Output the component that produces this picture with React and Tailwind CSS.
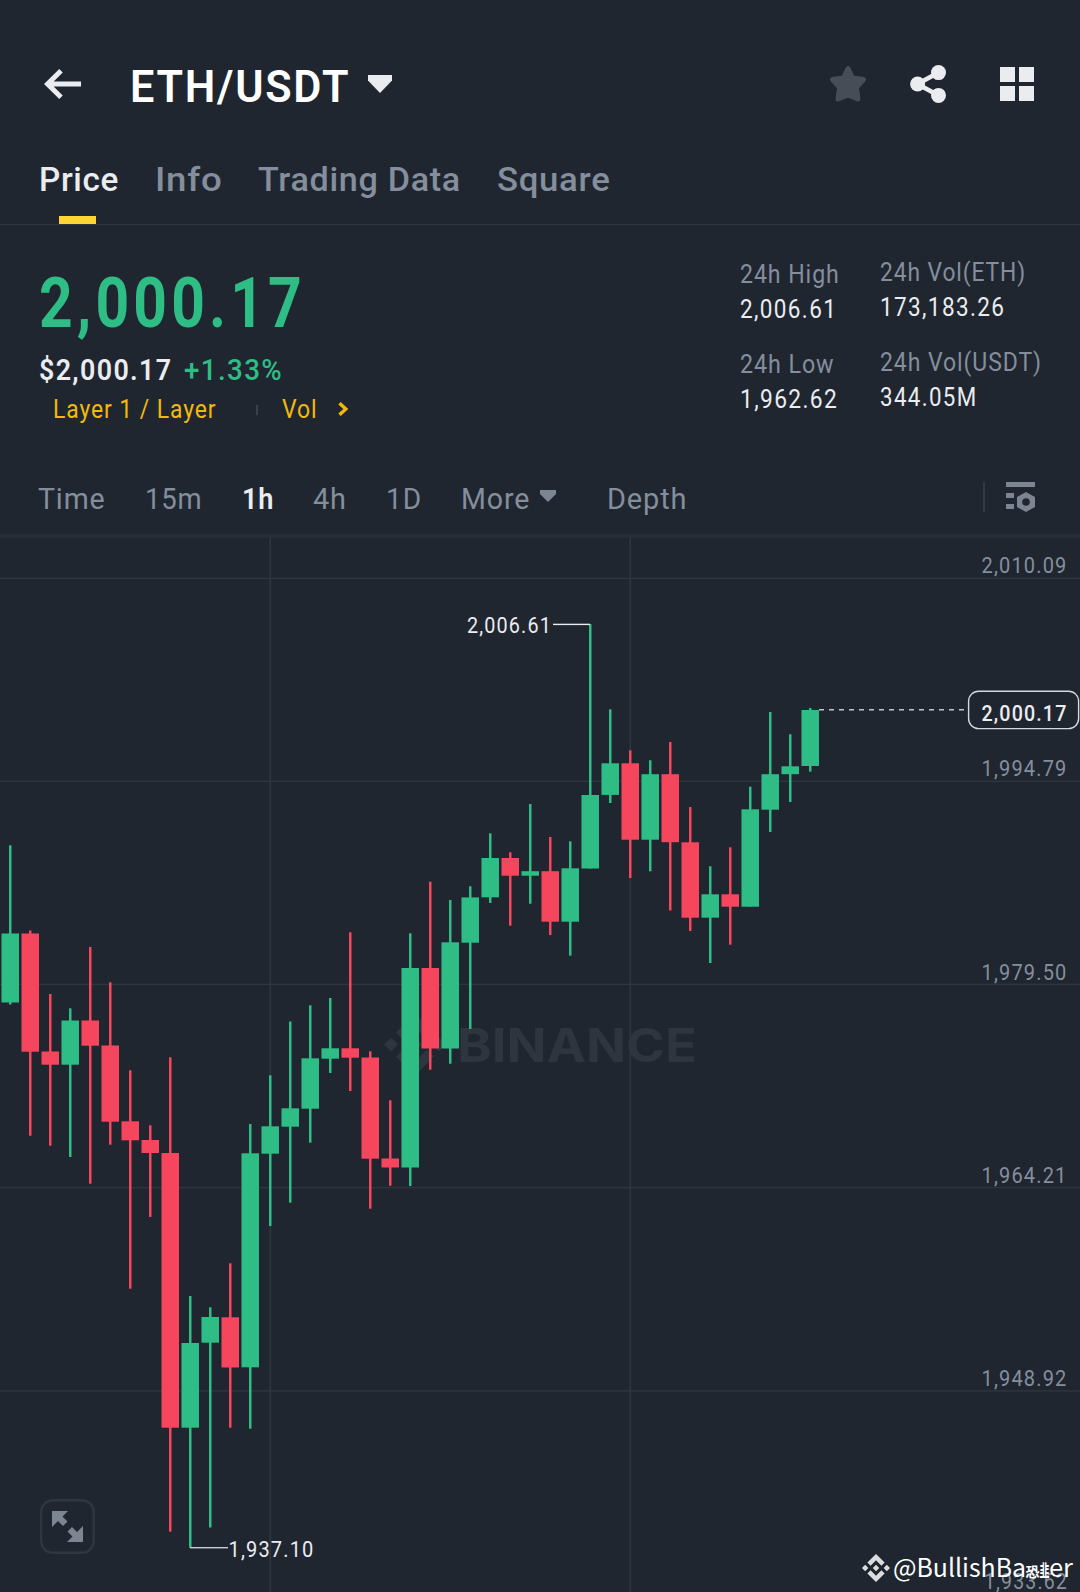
import { useLayoutEffect, useRef, useState } from "react";
import clsx from "clsx";

/* Condenses or widens a single line of text so that it fills its box. */
function Fit({ children, className }) {
  const box = useRef(null);
  const text = useRef(null);
  const [scale, setScale] = useState(1);
  useLayoutEffect(() => {
    const trailing = parseFloat(getComputedStyle(text.current).letterSpacing) || 0;
    setScale(box.current.clientWidth / (text.current.offsetWidth - trailing));
  }, [children]);
  return (
    <div ref={box} className={clsx("flex shrink-0 items-center whitespace-nowrap", className)}>
      <span ref={text} className="block shrink-0 origin-left" style={{ transform: `scaleX(${scale})` }}>
        {children}
      </span>
    </div>
  );
}

const UP = "#2ebd85";
const DOWN = "#f6465d";

// [high, body top, body bottom, low, rising]
const candles = [
  [845.3, 933.5, 1002.5, 1004.5, 1],
  [930.5, 933.5, 1051.7, 1135.7, 0],
  [994, 1051.5, 1064.7, 1145.7, 0],
  [1008.3, 1020.5, 1064.7, 1157, 1],
  [947, 1020.5, 1045.7, 1183.7, 0],
  [982.3, 1045.5, 1121.7, 1144.7, 0],
  [1070.3, 1121.3, 1140.3, 1288.7, 0],
  [1125.3, 1140, 1153, 1217, 0],
  [1057.3, 1153, 1427.7, 1531.7, 0],
  [1296, 1343, 1427.7, 1547.7, 1],
  [1307.3, 1317, 1342.7, 1527.5, 1],
  [1263.3, 1317.3, 1367.5, 1427.7, 0],
  [1124, 1153.3, 1367.3, 1428.7, 1],
  [1075.3, 1126.3, 1153.7, 1226, 1],
  [1021.5, 1108.3, 1126.7, 1202.7, 1],
  [1005.3, 1058.3, 1108.7, 1142.7, 1],
  [998, 1048.3, 1058.7, 1073, 1],
  [932.3, 1048.3, 1057.7, 1091, 0],
  [1051.3, 1057.5, 1158.7, 1208.7, 0],
  [1100.3, 1158.5, 1167.5, 1185.7, 0],
  [933.3, 968, 1167.5, 1186, 1],
  [881.7, 968, 1048.5, 1069.7, 0],
  [900, 942.3, 1048.5, 1063.7, 1],
  [886.3, 897.4, 942.7, 1029, 1],
  [833.3, 858, 897.3, 903, 1],
  [852.3, 858, 875.7, 925.7, 0],
  [804, 871.2, 875.7, 903.7, 1],
  [837, 871.2, 921.7, 935, 0],
  [841.3, 868.3, 921.7, 955.7, 1],
  [624, 795, 868.5, 868.5, 1],
  [709.3, 763.3, 794.9, 803, 1],
  [750.3, 763.3, 839.7, 878, 0],
  [760.3, 774.2, 839.7, 871.3, 1],
  [742, 774.2, 842.2, 910.5, 0],
  [807, 842.3, 917.7, 931, 0],
  [866.3, 894.3, 917.7, 963, 1],
  [847.3, 894.3, 906.7, 944.7, 0],
  [786.7, 809.3, 906.7, 906.7, 1],
  [712, 774.2, 809.7, 832, 1],
  [734.3, 766.3, 774.2, 802, 1],
  [708, 710, 766, 771.7, 1],
];

const axis = [
  ["2,010.09", 573, 578.3],
  ["1,994.79", 776, 781.3],
  ["1,979.50", 979.8, 984.3],
  ["1,964.21", 1182.7, 1187.6],
  ["1,948.92", 1386, 1390.9],
];

function Logo({ size, color, x, y, className }) {
  return (
    <svg x={x} y={y} width={size} height={size} viewBox="0 0 126.61 126.61" fill={color} className={className}>
      <path d="M38.73 53.2l24.59-24.58 24.6 24.6 14.3-14.31L63.32 0 24.43 38.89zM0 63.31L14.3 49l14.31 14.31-14.31 14.3zM38.73 73.41L63.32 98l24.6-24.6 14.31 14.29-38.91 38.92-38.9-38.9zM98 63.31L112.3 49l14.31 14.3-14.31 14.32zM77.83 63.3L63.32 48.78 48.79 63.3l14.53 14.53z" />
    </svg>
  );
}

function ChartText({ x, y, w, size = 22.5, fill = "#848e9c", weight = 400, children }) {
  return (
    <text
      x={x}
      y={y}
      textLength={w}
      lengthAdjust="spacingAndGlyphs"
      letterSpacing="1.3"
      fontSize={size}
      fontWeight={weight}
      fill={fill}
    >
      {children}
    </text>
  );
}

function Chart() {
  return (
    <svg width="1080" height="1054" viewBox="0 538 1080 1054" className="block" fontFamily="Roboto, sans-serif">
      <g fill="#2f3640">
        {axis.map(([label, , y]) => (
          <rect key={label} x="0" y={y - 0.7} width="1080" height="1.4" />
        ))}
        <rect x="269.5" y="538" width="1.6" height="1054" />
        <rect x="629.5" y="538" width="1.6" height="1054" />
      </g>

      <Logo x={384} y={1013.5} size={62} color="#2f353f" />
      <text
        x="457"
        y="1062"
        textLength="240"
        lengthAdjust="spacingAndGlyphs"
        fontFamily="Inter, sans-serif"
        fontSize="47"
        fontWeight="700"
        fill="#2f353f"
      >
        BINANCE
      </text>

      {candles.map(([high, top, bottom, low, rising], i) => (
        <g key={i} fill={rising ? UP : DOWN}>
          <rect x={20 * i + 9} y={high} width="2.5" height={low - high} />
          <rect x={20 * i + 1.5} y={top} width="17.5" height={bottom - top} />
        </g>
      ))}

      <rect x="553" y="623.7" width="37" height="1.4" fill="#eaecef" />
      <ChartText x={467} y={633} w={85} fill="#eaecef">2,006.61</ChartText>
      <rect x="190" y="1547" width="38" height="1.4" fill="#c9ccd3" />
      <ChartText x={228.5} y={1557} w={86} fill="#eaecef">1,937.10</ChartText>

      <path d="M819 709.8H964" stroke="#c0c4cc" strokeWidth="1.6" strokeDasharray="5 5" />
      {axis.map(([label, y]) => (
        <ChartText key={label} x={981.5} y={y} w={86}>{label}</ChartText>
      ))}
      <rect x="968.6" y="691.2" width="110" height="37.4" rx="10" fill="#202630" stroke="#d5d8de" strokeWidth="1.4" />
      <ChartText x={981.5} y={721} w={86} fill="#eaecef" weight={500}>2,000.17</ChartText>
      <ChartText x={984} y={1589} w={84}>1,933.62</ChartText>

      <rect x="41.2" y="1500.2" width="52.6" height="52.6" rx="12" fill="none" stroke="#2f3640" strokeWidth="2.4" />
      <g fill="#7d8592">
        <path d="M52 1511h16l-5.500 5.500 5 5-4.500 4.500-5-5-6 6z" />
        <path d="M83 1542h-16l5.500-5.500-5-5 4.500-4.500 5 5 6-6z" />
      </g>

      <Logo x={862} y={1554} size={28} color="#dcdde0" />
      <g fill="#ffffff" fontFamily="'Noto Sans CJK SC', sans-serif" fontSize="25">
        <text x="893" y="1577" textLength="133" lengthAdjust="spacingAndGlyphs">@BullishBa</text>
        <text x="1025.500" y="1576.500" fontSize="14" fontWeight="700">恐</text>
        <text x="1039.500" y="1577" fontSize="17" textLength="10" lengthAdjust="spacingAndGlyphs" fontWeight="700">韭</text>
        <text x="1049" y="1577" textLength="24" lengthAdjust="spacingAndGlyphs">er</text>
      </g>
    </svg>
  );
}

function Stat({ label, value, labelWidth, valueWidth }) {
  return (
    <div className="flex h-[90px] flex-col gap-[5px] text-[25px]">
      <Fit className={clsx("h-[30px] tracking-[0.04em] text-[#848e9c]", labelWidth)}>{label}</Fit>
      <Fit className={clsx("h-[30px] tracking-[0.06em] text-[#eaecef]", valueWidth)}>{value}</Fit>
    </div>
  );
}

export default function App() {
  return (
    <div className="h-[1592px] w-[1080px] overflow-hidden bg-[#202630] font-['Roboto',sans-serif] text-[#848e9c]">
      <header className="flex h-[128px] items-center pt-[40px]">
        <svg width="38" height="30" viewBox="0 0 38 30" className="ml-[44px] shrink-0" fill="none" stroke="#eaecef" strokeWidth="5">
          <path d="M3 15H37M17 1.800L3.600 15 17 28.200" />
        </svg>
        <Fit className="mt-[5px] ml-[48px] h-[50px] w-[219px] text-[44px] font-semibold tracking-[0.04em] text-white">ETH/USDT</Fit>
        <svg width="24" height="18" viewBox="0 0 24 18" className="ml-[19px] shrink-0" fill="#eaecef">
          <path d="M0 0H24V5.500L12 18 0 5.500z" />
        </svg>
        <svg width="38" height="38" viewBox="0 0 38 38" className="ml-auto shrink-0" fill="#474d57" stroke="#474d57" strokeWidth="5" strokeLinejoin="round">
          <path d="M19 3.500L23.500 13 34.500 14.500 27.300 22.500 29 34 19 30 9 34 10.700 22.500 3.500 14.500 14.500 13z" />
        </svg>
        <svg width="37" height="38" viewBox="0 0 37 38" className="ml-[43px] shrink-0" fill="#eaecef">
          <circle cx="7.600" cy="19" r="7.500" />
          <circle cx="28.500" cy="7.600" r="7.500" />
          <circle cx="28.500" cy="30.400" r="7.500" />
          <path d="M28.500 7.600L7.600 19l20.900 11.400" fill="none" stroke="#eaecef" strokeWidth="4.600" />
        </svg>
        <div className="mr-[46px] ml-[53px] grid shrink-0 grid-cols-2 gap-1">
          <i className="size-[15px] bg-[#eaecef]" />
          <i className="size-[15px] bg-[#eaecef]" />
          <i className="size-[15px] bg-[#eaecef]" />
          <i className="size-[15px] bg-[#eaecef]" />
        </div>
      </header>

      <nav className="flex h-[97px] border-b border-[#2f3640] pt-[32px] pl-[39px] text-[33px] font-medium tracking-[0.02em]">
        <div className="flex w-[79px] flex-col items-start">
          <Fit className="h-10 w-[79px] text-[#eaecef]">Price</Fit>
          <div className="mt-[16px] ml-[20px] h-2 w-[37px] bg-[#fcd535]" />
        </div>
        <Fit className="ml-[37px] h-10 w-[67px]">Info</Fit>
        <Fit className="ml-[36px] h-10 w-[202px]">Trading Data</Fit>
        <Fit className="ml-[37px] h-10 w-[113px]">Square</Fit>
      </nav>

      <section className="flex h-[237px]">
        <div className="flex flex-col pt-[48px] pl-[39px]">
          <Fit className="h-[61px] w-[263px] text-[70px] font-bold tracking-[0.07em] text-[#2ebd85]">2,000.17</Fit>
          <div className="mt-[17px] flex h-[39px] items-center text-[29px] font-medium tracking-[0.05em]">
            <Fit className="w-[132px] font-semibold text-[#eaecef]">$2,000.17</Fit>
            <Fit className="ml-[13px] w-[98px] text-[#2ebd85]">+1.33%</Fit>
          </div>
          <div className="mt-[3px] flex h-[34px] items-center pl-[14px] text-[25px] tracking-[0.04em] text-[#f0b90b]">
            <Fit className="w-[163px]">Layer 1 / Layer</Fit>
            <div className="ml-[40px] h-[10px] w-[2px] bg-[#3a414b]" />
            <Fit className="ml-[24px] w-[35px]">Vol</Fit>
            <svg width="11" height="14" viewBox="0 0 11 14" className="mb-[2px] ml-[21px]" fill="none" stroke="#f0b90b" strokeWidth="3.400">
              <path d="M1.500 1.200L7.800 7 1.500 12.800" />
            </svg>
          </div>
        </div>
        <div className="mr-[39px] ml-auto flex gap-[41px]">
          <div className="pt-[35px]">
            <Stat label="24h High" value="2,006.61" labelWidth="w-[99px]" valueWidth="w-[96px]" />
            <Stat label="24h Low" value="1,962.62" labelWidth="w-[94px]" valueWidth="w-[97px]" />
          </div>
          <div className="w-[161px] pt-[33px]">
            <Stat label="24h Vol(ETH)" value="173,183.26" labelWidth="w-[145px]" valueWidth="w-[124px]" />
            <Stat label="24h Vol(USDT)" value="344.05M" labelWidth="w-[161px]" valueWidth="w-[96px]" />
          </div>
        </div>
      </section>

      <div className="flex h-[76px] items-center border-b-4 border-[#282e38] pt-[3px] pl-[38px] text-[29px] tracking-[0.03em]">
        <Fit className="w-[67px]">Time</Fit>
        <Fit className="ml-[40px] w-[57px]">15m</Fit>
        <Fit className="ml-[40px] w-[32px] font-semibold text-[#eaecef]">1h</Fit>
        <Fit className="ml-[39px] w-[33px]">4h</Fit>
        <Fit className="ml-[40px] w-[35px]">1D</Fit>
        <Fit className="ml-[40px] w-[68px]">More</Fit>
        <svg width="16" height="12" viewBox="0 0 16 12" className="mb-[7px] ml-[11px] shrink-0" fill="#7d8592">
          <path d="M0 0H16V4L8 12 0 4z" />
        </svg>
        <Fit className="ml-[51px] w-[80px]">Depth</Fit>
        <div className="mb-[6px] ml-auto h-[30px] w-[2.500px] bg-[#333a45]" />
        <svg width="30" height="30" viewBox="0 0 30 30" className="mr-[44px] mb-[6px] ml-[21px] shrink-0" fill="#7d8592">
          <path d="M0 0h29v5H0zM0 11h8v5H0zM0 22h8v5H0z" />
          <path fillRule="evenodd" d="M20 10l9 5v10l-9 5-9-5V15zM20 16.200a3.800 3.800 0 1 0 0 7.600 3.800 3.800 0 1 0 0-7.600z" />
        </svg>
      </div>

      <Chart />
    </div>
  );
}
